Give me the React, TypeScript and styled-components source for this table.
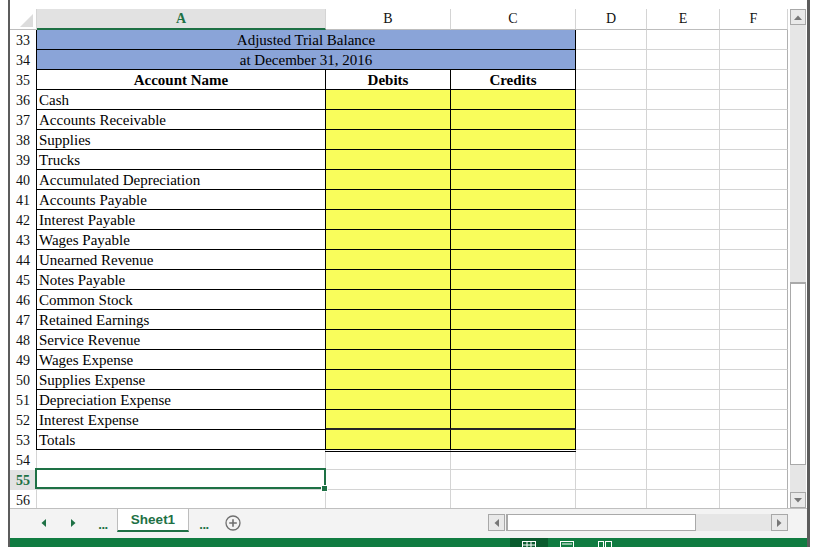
import React from "react";
import styled, { createGlobalStyle, css } from "styled-components";

const GREEN = "#1e7145";
const GRID = "#d4d4d4";
const BLACK = "#000";
const BLUE = "#8aa4d8";
const YELLOW = "#f9fd5b";

const GlobalStyle = createGlobalStyle`
  html, body { margin: 0; padding: 0; background: #fff; }
  body { font-family: "Liberation Serif", "Times New Roman", serif; }
`;

const Window = styled.div`
  margin-left: 8px;
  width: 797px;
  height: 538px;
  padding-top: 9px;
  border-left: 2px solid #5c5c5c;
  border-right: 3px solid #5c5c5c;
  display: flex;
  flex-direction: column;
  overflow: hidden;
`;

const Main = styled.div`
  display: flex;
  height: 499px;
  gap: 2px;
`;

const Sheet = styled.div`
  width: 778px;
  height: 499px;
  overflow: hidden;
  display: grid;
  grid-template-columns: 27px 289px 125px 125px 71px 73px 68px;
  grid-template-rows: 21px;
  grid-auto-rows: 20px;
`;

const Corner = styled.div`
  box-sizing: border-box;
  border-right: 1px solid ${GRID};
  border-bottom: 1px solid #bdbdbd;
  display: flex;
  align-items: flex-end;
  justify-content: flex-end;
  padding: 0 3px 2px 0;
`;

const ColHead = styled.div<{ $active?: boolean; $edge?: string }>`
  box-sizing: border-box;
  background: ${(p) => (p.$active ? "#e2e2e2" : "#fff")};
  border-right: 1px solid ${(p) => p.$edge ?? GRID};
  border-bottom: ${(p) => (p.$active ? `2px solid ${GREEN}` : "1px solid #bdbdbd")};
  display: flex;
  align-items: center;
  justify-content: center;
  font: ${(p) => (p.$active ? 700 : 400)} 14px "Liberation Serif", serif;
  color: ${(p) => (p.$active ? GREEN : "#111")};
  padding-top: ${(p) => (p.$active ? 1 : 0)}px;
`;

const RowHead = styled.div<{ $active?: boolean; $edge: string }>`
  box-sizing: border-box;
  background: ${(p) => (p.$active ? "#e2e2e2" : "#fff")};
  border-right: 1px solid ${(p) => p.$edge};
  display: flex;
  align-items: center;
  justify-content: center;
  padding-top: 1px;
  font: ${(p) => (p.$active ? 700 : 400)} 14px "Liberation Serif", serif;
  color: ${(p) => (p.$active ? GREEN : "#111")};
`;

type CellProps = {
  $fill?: string;
  $right?: string;
  $bottom?: string;
  $bottomW?: number;
  $bold?: boolean;
  $center?: boolean;
  $span?: number;
  $double?: boolean;
  $selected?: boolean;
};

const Cell = styled.div<CellProps>`
  box-sizing: border-box;
  position: relative;
  grid-column: span ${(p) => p.$span ?? 1};
  background: ${(p) => p.$fill ?? "#fff"};
  border-right: 1px solid ${(p) => p.$right ?? GRID};
  border-bottom: ${(p) => p.$bottomW ?? 1}px solid ${(p) => p.$bottom ?? GRID};
  display: flex;
  align-items: center;
  justify-content: ${(p) => (p.$center ? "center" : "flex-start")};
  padding-left: ${(p) => (p.$center ? 0 : 2)}px;
  padding-top: 2px;
  font: ${(p) => (p.$bold ? 700 : 400)} 15px "Liberation Serif", "Times New Roman", serif;
  color: #000;
  white-space: nowrap;
  ${(p) =>
    p.$double &&
    css`
      z-index: 1;
      &::after {
        content: "";
        position: absolute;
        left: -1px;
        right: -1px;
        bottom: -3px;
        height: 1px;
        background: ${BLACK};
      }
    `}
  ${(p) =>
    p.$selected &&
    css`
      z-index: 2;
      &::after {
        content: "";
        position: absolute;
        left: -2px;
        top: -2px;
        right: -1px;
        bottom: 0;
        border: 2px solid ${GREEN};
      }
      &::before {
        content: "";
        position: absolute;
        right: -2px;
        bottom: -2px;
        width: 5px;
        height: 5px;
        background: ${GREEN};
        box-shadow: 0 0 0 1px #fff;
        z-index: 1;
      }
    `}
`;

const VScroll = styled.div`
  width: 16px;
  display: flex;
  flex-direction: column;
`;

const ScrollBtn = styled.div<{ $w?: number; $h?: number }>`
  box-sizing: border-box;
  width: ${(p) => p.$w ?? 16}px;
  height: ${(p) => p.$h ?? 16}px;
  flex: none;
  background: #e9e9e9;
  border: 1px solid #a8a8a8;
  display: flex;
  align-items: center;
  justify-content: center;
`;

const VTrack = styled.div`
  flex: 1;
  background: #e6e6e6;
  padding-top: 257px;
`;

const VThumb = styled.div`
  box-sizing: border-box;
  height: 183px;
  background: #fff;
  border: 1px solid #a9a9a9;
  border-top-width: 2px;
`;

const TabBar = styled.div`
  box-sizing: border-box;
  height: 30px;
  flex: none;
  background: #f3f3f3;
  border-top: 1px solid #bfbfbf;
  display: flex;
  align-items: flex-start;
`;

const NavArrow = styled.svg<{ $ml: number }>`
  margin-left: ${(p) => p.$ml}px;
  margin-top: 10px;
  flex: none;
`;

const Dots = styled.span<{ $ml: number }>`
  margin-left: ${(p) => p.$ml}px;
  width: 12px;
  margin-top: 8px;
  font: 700 13px "Liberation Sans", Arial, sans-serif;
  color: ${GREEN};
  text-align: center;
  letter-spacing: -0.5px;
`;

const SheetTab = styled.div`
  box-sizing: border-box;
  margin-left: 8px;
  width: 72px;
  height: 23px;
  background: #fff;
  border-left: 1px solid #bdbdbd;
  border-right: 1px solid #bdbdbd;
  border-bottom: 2px solid ${GREEN};
  display: flex;
  align-items: center;
  justify-content: center;
  font: 700 13.5px "Liberation Sans", Arial, sans-serif;
  color: ${GREEN};
  padding-bottom: 1px;
`;

const PlusIcon = styled.svg`
  margin-left: 15px;
  margin-top: 6px;
  flex: none;
`;

const HScroll = styled.div`
  margin-left: auto;
  margin-right: 19px;
  margin-top: 5px;
  width: 300px;
  height: 17px;
  display: flex;
`;

const HThumb = styled.div`
  box-sizing: border-box;
  margin-left: 1px;
  width: 190px;
  background: #fff;
  border: 1px solid #a9a9a9;
  border-left-width: 2px;
`;

const HTrack = styled.div`
  flex: 1;
  background: #e6e6e6;
`;

const StatusBar = styled.div`
  height: 9px;
  flex: none;
  background: #107c41;
  display: flex;
  overflow: hidden;
`;

const ViewGroup = styled.div`
  margin-left: 500px;
  width: 38px;
  background: #0a5c2f;
  display: flex;
  justify-content: center;
`;

const ViewIcon = styled.svg<{ $ml?: number }>`
  margin-left: ${(p) => p.$ml ?? 0}px;
  margin-top: 3px;
  flex: none;
`;

const accounts = [
  "Cash",
  "Accounts Receivable",
  "Supplies",
  "Trucks",
  "Accumulated Depreciation",
  "Accounts Payable",
  "Interest Payable",
  "Wages Payable",
  "Unearned Revenue",
  "Notes Payable",
  "Common Stock",
  "Retained Earnings",
  "Service Revenue",
  "Wages Expense",
  "Supplies Expense",
  "Depreciation Expense",
  "Interest Expense",
];

const EmptyTail = () => (
  <>
    <Cell />
    <Cell />
    <Cell $right="#b0b0b0" />
  </>
);

const UpTri = () => (
  <svg width="8" height="5" viewBox="0 0 8 5">
    <path d="M0 5 L4 0.5 L8 5 Z" fill="#777" />
  </svg>
);
const DownTri = () => (
  <svg width="8" height="5" viewBox="0 0 8 5">
    <path d="M0 0 L4 4.5 L8 0 Z" fill="#777" />
  </svg>
);
const LeftTri = () => (
  <svg width="5" height="8" viewBox="0 0 5 8">
    <path d="M5 0 L0.5 4 L5 8 Z" fill="#777" />
  </svg>
);
const RightTri = () => (
  <svg width="5" height="8" viewBox="0 0 5 8">
    <path d="M0 0 L4.5 4 L0 8 Z" fill="#777" />
  </svg>
);

export default function App() {
  const rows: React.ReactNode[] = [];

  const header = (n: number, edge: string, active = false) => (
    <RowHead key={`h${n}`} $edge={edge} $active={active}>
      {n}
    </RowHead>
  );

  ["Adjusted Trial Balance", "at December 31, 2016"].forEach((t, i) => {
    const n = 33 + i;
    rows.push(
      <React.Fragment key={n}>
        {header(n, BLACK)}
        <Cell $span={3} $fill={BLUE} $right={BLACK} $bottom={BLACK} $center>
          {t}
        </Cell>
        <EmptyTail />
      </React.Fragment>
    );
  });

  rows.push(
    <React.Fragment key={35}>
      {header(35, BLACK)}
      <Cell $right={BLACK} $bottom={BLACK} $bold $center>
        Account Name
      </Cell>
      <Cell $right={BLACK} $bottom={BLACK} $bold $center>
        Debits
      </Cell>
      <Cell $right={BLACK} $bottom={BLACK} $bold $center>
        Credits
      </Cell>
      <EmptyTail />
    </React.Fragment>
  );

  accounts.forEach((a, i) => {
    const n = 36 + i;
    const last = n === 52;
    rows.push(
      <React.Fragment key={n}>
        {header(n, BLACK)}
        <Cell $right={BLACK} $bottom={BLACK}>
          {a}
        </Cell>
        <Cell $fill={YELLOW} $right={BLACK} $bottom={last ? "#262626" : BLACK} $bottomW={last ? 2 : 1} />
        <Cell $fill={YELLOW} $right={BLACK} $bottom={last ? "#262626" : BLACK} $bottomW={last ? 2 : 1} />
        <EmptyTail />
      </React.Fragment>
    );
  });

  rows.push(
    <React.Fragment key={53}>
      {header(53, BLACK)}
      <Cell $right={BLACK} $bottom={BLACK}>
        Totals
      </Cell>
      <Cell $fill={YELLOW} $right={BLACK} $bottom={BLACK} $double />
      <Cell $fill={YELLOW} $right={BLACK} $bottom={BLACK} $double />
      <EmptyTail />
    </React.Fragment>
  );

  [54, 55, 56].forEach((n) => {
    rows.push(
      <React.Fragment key={n}>
        {header(n, GRID, n === 55)}
        <Cell $selected={n === 55} />
        <Cell />
        <Cell />
        <EmptyTail />
      </React.Fragment>
    );
  });

  return (
    <>
      <GlobalStyle />
      <Window>
        <Main>
          <Sheet>
            <Corner>
              <svg width="13" height="13" viewBox="0 0 13 13">
                <path d="M13 0 L13 13 L0 13 Z" fill="#dcdcdc" />
              </svg>
            </Corner>
            <ColHead $active>A</ColHead>
            <ColHead>B</ColHead>
            <ColHead>C</ColHead>
            <ColHead>D</ColHead>
            <ColHead>E</ColHead>
            <ColHead>F</ColHead>
            {rows}
          </Sheet>
          <VScroll>
            <ScrollBtn>
              <UpTri />
            </ScrollBtn>
            <VTrack>
              <VThumb />
            </VTrack>
            <ScrollBtn>
              <DownTri />
            </ScrollBtn>
          </VScroll>
        </Main>
        <TabBar>
          <NavArrow $ml={31} width="5" height="8" viewBox="0 0 5 8">
            <path d="M5 0 L0.5 4 L5 8 Z" fill={GREEN} />
          </NavArrow>
          <NavArrow $ml={25} width="5" height="8" viewBox="0 0 5 8">
            <path d="M0 0 L4.5 4 L0 8 Z" fill={GREEN} />
          </NavArrow>
          <Dots $ml={21}>...</Dots>
          <SheetTab>Sheet1</SheetTab>
          <Dots $ml={9}>...</Dots>
          <PlusIcon width="16" height="16" viewBox="0 0 16 16">
            <circle cx="8" cy="8" r="7" fill="none" stroke="#6f6f6f" strokeWidth="1.3" />
            <path d="M8 4.2 V11.8 M4.2 8 H11.8" stroke="#6f6f6f" strokeWidth="1.6" />
          </PlusIcon>
          <HScroll>
            <ScrollBtn $w={17} $h={17}>
              <LeftTri />
            </ScrollBtn>
            <HThumb />
            <HTrack />
            <ScrollBtn $w={17} $h={17}>
              <RightTri />
            </ScrollBtn>
          </HScroll>
        </TabBar>
        <StatusBar>
          <ViewGroup>
            <ViewIcon width="14" height="12" viewBox="0 0 14 12">
              <rect x="0.5" y="0.5" width="13" height="11" fill="none" stroke="#fff" />
              <path d="M5 0 V12 M9 0 V12 M0 4 H14" stroke="#fff" />
            </ViewIcon>
          </ViewGroup>
          <ViewIcon $ml={12} width="14" height="12" viewBox="0 0 14 12">
            <rect x="0.5" y="0.5" width="13" height="11" fill="none" stroke="#fff" />
            <path d="M2 3 H12" stroke="#fff" />
          </ViewIcon>
          <ViewIcon $ml={24} width="14" height="12" viewBox="0 0 14 12">
            <rect x="0.5" y="0.5" width="5" height="11" fill="none" stroke="#fff" />
            <rect x="7.5" y="0.5" width="6" height="11" fill="none" stroke="#fff" />
          </ViewIcon>
        </StatusBar>
      </Window>
    </>
  );
}
